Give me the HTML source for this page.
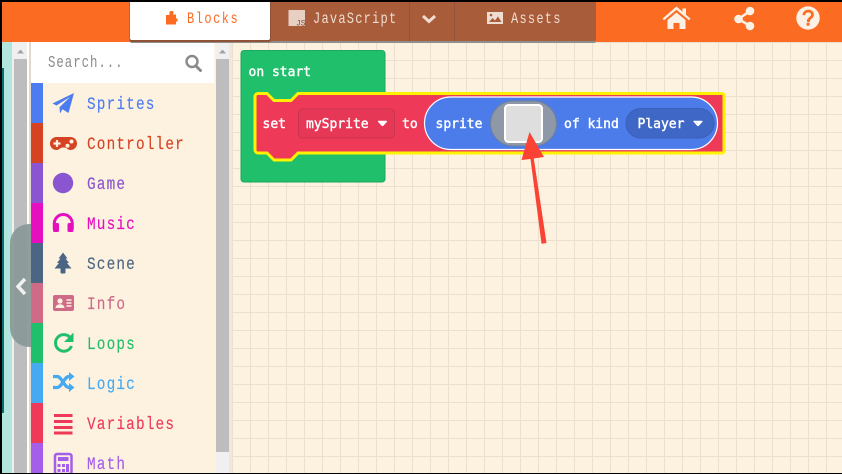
<!DOCTYPE html>
<html><head><meta charset="utf-8">
<style>
html,body{margin:0;padding:0;width:842px;height:474px;overflow:hidden;background:#000}
svg{display:block;position:absolute;left:0;top:0}
text{white-space:pre}
.cat{font:18px "Liberation Mono",monospace;letter-spacing:1.45px;stroke-width:.15px}
.b{font:13px "DejaVu Sans Mono","Liberation Mono",monospace;fill:#fff;stroke:#fff;stroke-width:.4px}
.tab{font:16px "Liberation Mono",monospace;letter-spacing:1.67px;fill:#f0ddd2}
</style></head><body>
<svg width="842" height="474" viewBox="0 0 842 474" xmlns="http://www.w3.org/2000/svg">
<defs>
<pattern id="g" x="232" y="42" width="18" height="18" patternUnits="userSpaceOnUse">
<rect width="18" height="18" fill="#fdf1e0"/>
<rect x="0" width="1" height="18" fill="#ecdfd0"/>
<rect y="0" width="18" height="1" fill="#ecdfd0"/>
</pattern>
</defs>
<rect width="842" height="474" fill="#000"/>
<!-- workspace -->
<rect x="229" y="42" width="613" height="431" fill="url(#g)"/>
<rect x="229" y="42" width="3" height="431" fill="#eee8df"/>
<!-- header -->
<rect x="2" y="2" width="840" height="40" fill="#fb6c22"/>
<!-- left simulator strip -->
<rect x="2" y="42" width="10" height="431" fill="#b2e5dd"/>
<rect x="0" y="42" width="2" height="431" fill="#000"/>
<rect x="2" y="68" width="2" height="345" fill="#0a6d74"/>
<rect x="12" y="42" width="15" height="431" fill="#f0f0f0"/>
<rect x="14" y="59" width="13" height="414" fill="#bdbdbd"/>
<path d="M17 53.500l3.500-4 3.500 4z" fill="#a3a3a3"/>
<rect x="27" y="42" width="2" height="431" fill="#fff"/>
<rect x="29" y="42" width="2" height="431" fill="#e3d9cb"/>
<!-- sidebar -->
<rect x="31" y="42" width="183" height="41" fill="#fff"/>
<rect x="31" y="83" width="185" height="390" fill="#fdf1e0"/>
<rect x="214" y="42" width="2" height="41" fill="#fdf1e0"/>
<rect x="216" y="42" width="13" height="431" fill="#f0f0f0"/>
<rect x="216" y="59" width="13" height="393" fill="#bdbdbd"/>
<path d="M219 53.500l3.500-4 3.500 4z" fill="#a3a3a3"/>
<text transform="translate(48 67) scale(.75 1)" font-family="Liberation Mono,monospace" font-size="16.500" letter-spacing="1.300" fill="#8a8a8a">Search...</text>
<circle cx="192" cy="61.500" r="5.500" fill="none" stroke="#8a8a8a" stroke-width="2.400"/>
<path d="M196 66l4.500 4.500" stroke="#8a8a8a" stroke-width="3" stroke-linecap="round"/>
<!-- colour strips -->
<rect x="31" y="83" width="12" height="40" fill="#4c7cf0"/>
<rect x="31" y="123" width="12" height="40" fill="#d54322"/>
<rect x="31" y="163" width="12" height="40" fill="#8a55d0"/>
<rect x="31" y="203" width="12" height="40" fill="#e50fc0"/>
<rect x="31" y="243" width="12" height="40" fill="#4b6584"/>
<rect x="31" y="283" width="12" height="40" fill="#cf6a87"/>
<rect x="31" y="323" width="12" height="40" fill="#20bf6b"/>
<rect x="31" y="363" width="12" height="40" fill="#45aaf2"/>
<rect x="31" y="403" width="12" height="40" fill="#ee3a58"/>
<rect x="31" y="443" width="12" height="30" fill="#a55eea"/>
<!-- category text -->
<text class="cat" transform="translate(87 109) scale(.8 1)" fill="#4c7cf0" stroke="#4c7cf0">Sprites</text>
<text class="cat" transform="translate(87 149) scale(.8 1)" fill="#d54322" stroke="#d54322">Controller</text>
<text class="cat" transform="translate(87 189) scale(.8 1)" fill="#8a55d0" stroke="#8a55d0">Game</text>
<text class="cat" transform="translate(87 229) scale(.8 1)" fill="#e50fc0" stroke="#e50fc0">Music</text>
<text class="cat" transform="translate(87 269) scale(.8 1)" fill="#4b6584" stroke="#4b6584">Scene</text>
<text class="cat" transform="translate(87 309) scale(.8 1)" fill="#cf6a87" stroke="#cf6a87">Info</text>
<text class="cat" transform="translate(87 349) scale(.8 1)" fill="#20bf6b" stroke="#20bf6b">Loops</text>
<text class="cat" transform="translate(87 389) scale(.8 1)" fill="#45aaf2" stroke="#45aaf2">Logic</text>
<text class="cat" transform="translate(87 429) scale(.8 1)" fill="#ee3a58" stroke="#ee3a58">Variables</text>
<text class="cat" transform="translate(87 469) scale(.8 1)" fill="#a55eea" stroke="#a55eea">Math</text>
<!-- category icons -->
<path d="M74 93L68.500 113 62.500 109.200 60 113.500 59.500 107.200 70 97 56.500 105.500 52.500 103.500z" fill="#4c7cf0"/>
<path d="M56.500 137h14a6.500 6.500 0 0 1 0 13c-3 0-3.500-2.500-6-2.500h-2c-2.500 0-3 2.500-6 2.500a6.500 6.500 0 0 1 0-13z" fill="#d54322"/>
<path d="M53.500 143.500h7M57 140v7" stroke="#fdf1e0" stroke-width="2.200"/>
<circle cx="67.500" cy="145.800" r="2" fill="#fdf1e0"/><circle cx="71.500" cy="141.500" r="2" fill="#fdf1e0"/>
<circle cx="63" cy="183" r="10.200" fill="#8a55d0"/>
<path d="M54.300 229v-5.500a9 9 0 0 1 18 0v5.500" fill="none" stroke="#e50fc0" stroke-width="3"/>
<rect x="53" y="223" width="6" height="9" rx="1.500" fill="#e50fc0"/><rect x="67.500" y="223" width="6" height="9" rx="1.500" fill="#e50fc0"/>
<path d="M63 252.500l4.500 6h-2l3.500 4.500h-2l4.500 5.500h-17l4.500-5.500h-2l3.500-4.500h-2z" fill="#4b6584"/>
<rect x="60.500" y="268" width="5" height="5.500" rx="1" fill="#4b6584"/>
<rect x="53" y="295" width="21" height="16" rx="2" fill="#cf6a87"/>
<circle cx="60" cy="301" r="2.600" fill="#fdf1e0"/>
<path d="M55.500 308c0-5 9-5 9 0z" fill="#fdf1e0"/>
<path d="M66.500 300h5M66.500 303h5M66.500 306h5" stroke="#fdf1e0" stroke-width="1.400"/>
<path d="M70.500 338a8.300 8.300 0 1 0 1 8" fill="none" stroke="#20bf6b" stroke-width="3"/>
<path d="M73.500 332.500v9.500h-9.500z" fill="#20bf6b"/>
<path d="M53 376.500h4c5 0 7 11 12 11h1M53 387.500h4c5 0 7-11 12-11h1" fill="none" stroke="#45aaf2" stroke-width="3.200"/>
<path d="M69 372l5.500 4.500-5.500 4.500zM69 383l5.500 4.500-5.500 4.500z" fill="#45aaf2"/>
<rect x="54" y="414" width="18.500" height="3" fill="#ee3a58"/><rect x="54" y="420" width="18.500" height="3" fill="#ee3a58"/><rect x="54" y="426" width="18.500" height="3" fill="#ee3a58"/><rect x="54" y="431.500" width="18.500" height="3" fill="#ee3a58"/>
<rect x="55" y="454" width="16.500" height="20" rx="2" fill="none" stroke="#a55eea" stroke-width="2.500"/>
<rect x="58" y="457" width="10.500" height="4" fill="#a55eea"/>
<path d="M57.500 464h3v3h-3zM62 464h3v3h-3zM66 464h3v8h-3zM57.500 469h3v3h-3zM62 469h3v3h-3z" fill="#a55eea"/>
<!-- collapse handle -->
<path d="M31 224h-2a19 19 0 0 0-19 19v85a19 19 0 0 0 19 19h2z" fill="#8a9a98" fill-opacity=".95"/>
<path d="M25 279l-7 7.500 7 7.500" fill="none" stroke="#f0f0ee" stroke-width="3.500"/>
<!-- tabs -->
<path d="M130 2H596V41a2 2 0 0 1-2 2H132a2 2 0 0 1-2-2z" fill="#8d8f88"/>
<path d="M130 2H596V39a2 2 0 0 1-2 2H132a2 2 0 0 1-2-2z" fill="#a85c3a"/>
<path d="M129.500 2H271V40a2 2 0 0 1-2 2H131.500a2 2 0 0 1-2-2z" fill="#8f5236"/>
<path d="M130 2H270V38a2 2 0 0 1-2 2H132a2 2 0 0 1-2-2z" fill="#fff"/>
<rect x="409" y="2" width="1" height="39" fill="#97523a"/>
<rect x="454" y="2" width="1" height="39" fill="#97523a"/>
<path d="M166 15h3.500v-1.500c-1.500-3 5-3.500 4-.5l-.5 1.500H176v4c2-1 2.500 4 0 3v3h-10z" fill="#fb6c22"/>
<text transform="translate(187 23) scale(.75 1)" font-family="Liberation Mono,monospace" font-size="16" letter-spacing="2" fill="#fb6c22">Blocks</text>
<rect x="288.500" y="10" width="16.500" height="16" fill="#e8cfc3"/>
<text x="296" y="25.500" font-family="Liberation Mono,monospace" font-size="8" fill="#8a4a30">JS</text>
<text class="tab" transform="translate(313 23) scale(.75 1)">JavaScript</text>
<path d="M423 16l6 5.500 6-5.500" fill="none" stroke="#f0ddd2" stroke-width="3"/>
<path d="M487 12h16v12h-16z" fill="#f0ddd2"/>
<path d="M489 22l3.500-4 2.500 2.500 3-4 3.500 5.500z" fill="#a85c3a"/><circle cx="491" cy="15" r="1.300" fill="#a85c3a"/>
<text class="tab" transform="translate(511 23) scale(.75 1)">Assets</text>
<!-- right icons -->
<path d="M676.500 6.500l6 5.200V8.500h3.500v6.300l4.500 3.800-1.500 1.700-12.500-10.600-12.500 10.600-1.500-1.700z" fill="#fdf1e6"/>
<path d="M676.500 12.500l9 7.500v9h-6v-6h-6v6h-6v-9z" fill="#fdf1e6"/>
<circle cx="750" cy="11" r="4.300" fill="#fdf1e6"/><circle cx="738.500" cy="19" r="4.300" fill="#fdf1e6"/><circle cx="750" cy="26" r="4.300" fill="#fdf1e6"/>
<path d="M750 11L738.500 19 750 26" fill="none" stroke="#fdf1e6" stroke-width="2.500"/>
<circle cx="808" cy="18" r="11.700" fill="#fdf1e6"/>
<path d="M803.800 15.200c.3-5.500 8.700-5.500 8.700-.5 0 3-3.800 3-3.800 6h-1.700" fill="none" stroke="#fb6c22" stroke-width="2.700"/>
<rect x="806.600" y="22.800" width="2.900" height="2.900" fill="#fb6c22"/>
<!-- on start block -->
<rect x="241" y="50.500" width="144" height="131.500" rx="3" fill="#20bf6b" stroke="#1ca85e"/>
<text class="b" x="248.500" y="76">on start</text>
<!-- set block -->
<path d="M258 93.500h9l7 7h17l7-7H722a2 2 0 0 1 2 2V151a2 2 0 0 1-2 2H298l-7 7h-17l-7-7h-9a3 3 0 0 1-3-3V96.500a3 3 0 0 1 3-3z" fill="#ee3a58" stroke="#fff200" stroke-width="3"/>
<text class="b" x="262.500" y="128">set</text>
<rect x="298.500" y="109" width="96" height="29" rx="4" fill="#e63856" stroke="#c93550"/>
<text class="b" x="306" y="128">mySprite</text>
<path d="M378.300 120.700h8c.8 0 1 .8.600 1.200l-3.500 3.800c-.6.500-1.300.500-1.800 0l-3.500-3.800c-.4-.4-.2-1.200.200-1.200z" fill="#fff"/>
<text class="b" x="402" y="128">to</text>
<rect x="424.500" y="97" width="293" height="52.500" rx="26.200" fill="#4c7cea" stroke="#fff" stroke-width="1.200"/>
<text class="b" x="435.500" y="128">sprite</text>
<rect x="490.500" y="101" width="66" height="45" rx="22.500" fill="#8f98a6" stroke="#6f7f9c"/>
<rect x="505" y="105" width="37" height="37" rx="3.500" fill="#dedede" stroke="#fff" stroke-width="2"/>
<text class="b" x="564" y="128">of kind</text>
<rect x="626" y="108.500" width="88" height="29.500" rx="14.700" fill="#3f68c6" stroke="#3a5fb8"/>
<text class="b" x="637.500" y="128">Player</text>
<path d="M693.800 120.700h8c.8 0 1 .8.600 1.200l-3.500 3.800c-.6.500-1.300.500-1.800 0l-3.500-3.800c-.4-.4-.2-1.200.200-1.200z" fill="#fff"/>
<!-- red arrow -->
<path d="M529.500 132L544 157 533.800 158.500 546.500 243 541.500 243.800 530.500 159 521.500 160z" fill="#fb4335"/>
<rect x="0" y="473" width="842" height="1" fill="#000"/>
</svg>
</body></html>
